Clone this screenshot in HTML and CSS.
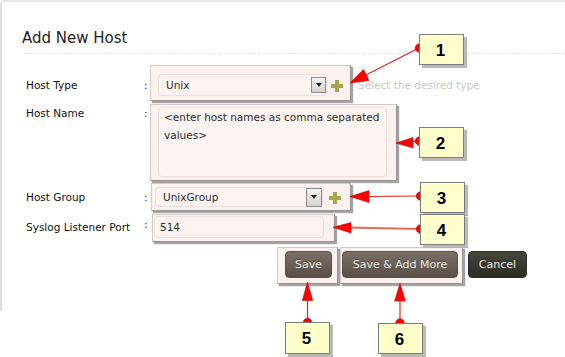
FILE: index.html
```html
<!DOCTYPE html>
<html>
<head>
<meta charset="utf-8">
<link rel="stylesheet" href="styles.css">
</head>
<body>
<div class="panel">
  <h1 class="title">Add New Host</h1>
  <div class="divider"></div>
  <div class="form">
    <div class="row row-type">
      <div class="label">Host Type</div>
      <div class="colon">:</div>
      <div class="hl hl-type">
        <div class="ctl">
          <div class="select sel-type"><span class="val">Unix</span><span class="drop"><span class="tri"></span></span></div>
          <svg class="plus" viewBox="0 0 12 12" width="12" height="12"><path d="M4 0h4v4h4v4h-4v4h-4v-4h-4v-4h4z" fill="#a6a64a"/></svg>
        </div>
      </div>
      <div class="hint">Select the desired type</div>
    </div>
    <div class="row row-name">
      <div class="label">Host Name</div>
      <div class="colon">:</div>
      <div class="hl hl-name">
        <div class="textarea">&lt;enter host names as comma separated values&gt;</div>
      </div>
    </div>
    <div class="row row-group">
      <div class="label">Host Group</div>
      <div class="colon">:</div>
      <div class="hl hl-group">
        <div class="ctl">
          <div class="select sel-group"><span class="val">UnixGroup</span><span class="drop drop-tall"><span class="tri"></span></span></div>
          <svg class="plus plus-group" viewBox="0 0 12 12" width="12" height="12"><path d="M4 0h4v4h4v4h-4v4h-4v-4h-4v-4h4z" fill="#a6a64a"/></svg>
        </div>
      </div>
    </div>
    <div class="row row-port">
      <div class="label">Syslog Listener Port</div>
      <div class="colon">:</div>
      <div class="hl hl-port">
        <div class="input">514</div>
      </div>
    </div>
    <div class="actions">
      <div class="hl hl-save"><div class="btn btn-save">Save</div></div>
      <div class="hl hl-more"><div class="btn btn-more">Save &amp; Add More</div></div>
      <div class="btn btn-cancel">Cancel</div>
    </div>
  </div>
</div>

<svg class="notes" width="565" height="357" viewBox="0 0 565 357">
  <defs>
    <filter id="sh" x="-20%" y="-20%" width="150%" height="150%">
      <feOffset dx="3" dy="3" in="SourceAlpha" result="o"/>
      <feColorMatrix in="o" type="matrix" values="0 0 0 0 0.45  0 0 0 0 0.45  0 0 0 0 0.45  0 0 0 0.9 0" result="c"/>
      <feMerge><feMergeNode in="c"/><feMergeNode in="SourceGraphic"/></feMerge>
    </filter>
  </defs>
  <!-- arrows -->
  <g stroke="#e0251a" stroke-width="1.2" fill="none">
    <line x1="419" y1="48" x2="364" y2="76"/>
    <line x1="419" y1="141" x2="410" y2="142"/>
    <line x1="420" y1="196" x2="366" y2="196.5"/>
    <line x1="420" y1="229" x2="348" y2="227.5" stroke="#e06a5a" stroke-width="1.8"/>
    <line x1="307.5" y1="322" x2="307.5" y2="298"/>
    <line x1="400" y1="323" x2="400" y2="299"/>
  </g>
  <g fill="#f00" stroke="#c00" stroke-width="0.6">
    <polygon points="350,83 369,80.5 363.5,69.5"/>
    <polygon points="396,143 413,137.5 413,148"/>
    <polygon points="350,196.5 369,190.5 369,202.5"/>
    <polygon points="333,227.3 351,222.5 351,233"/>
    <polygon points="307.5,282 302.3,300.5 312.7,300.5"/>
    <polygon points="400,283.5 394.6,301 405.4,301"/>
  </g>
  <g fill="#f00" stroke="#b00" stroke-width="0.6">
    <circle cx="419.5" cy="48" r="4.3"/>
    <circle cx="419.5" cy="141" r="4.3"/>
    <circle cx="420.5" cy="196" r="4.3"/>
    <circle cx="420.5" cy="229" r="4.3"/>
    <circle cx="307.5" cy="322.5" r="4.3"/>
    <circle cx="400" cy="323" r="4.3"/>
  </g>
  <g class="box" filter="url(#sh)">
    <rect x="419.5" y="34.5" width="44" height="30"/>
    <rect x="419.5" y="127.5" width="44" height="30"/>
    <rect x="420.5" y="182.5" width="44" height="30"/>
    <rect x="420.5" y="214.5" width="44" height="30"/>
    <rect x="285.5" y="322.5" width="44" height="31"/>
    <rect x="378.5" y="323.5" width="44" height="30"/>
  </g>
  <g class="num">
    <text x="440.5" y="55.5">1</text>
    <text x="440.5" y="148.5">2</text>
    <text x="441.5" y="203.5">3</text>
    <text x="441.5" y="235.5">4</text>
    <text x="306.5" y="344">5</text>
    <text x="399.5" y="344.5">6</text>
  </g>
</svg>
</body>
</html>
```

FILE: styles.css
```css
html, body {
  margin: 0;
  padding: 0;
  background: #ffffff;
}
body {
  position: relative;
  width: 565px;
  height: 357px;
  overflow: hidden;
  font-family: "DejaVu Sans", "Liberation Sans", sans-serif;
  font-size: 10.5px;
  color: #1a1a1a;
}
.panel {
  height: 309px;
  border-top: 2px solid #e6e6e6;
  border-left: 2px solid #dedede;
  border-top-left-radius: 5px;
  padding-left: 20px;
  box-sizing: content-box;
}
.title {
  margin: 27px 0 0 0;
  font-size: 15px;
  font-weight: normal;
  line-height: 18px;
  color: #1e1e1e;
}
.divider {
  margin: 6px 0 11px 2px;
  border-top: 1px dashed #e4e4e4;
}
.row {
  display: flex;
  align-items: flex-start;
  line-height: 14px;
}
.label {
  width: 122px;
  padding-left: 4px;
  box-sizing: border-box;
  color: #111;
  white-space: nowrap;
}
.colon {
  width: 6px;
  color: #333;
}
.row-type .label, .row-type .colon, .row-type .hint { margin-top: 13px; }
.row-name { margin-top: 3px; }
.row-name .label, .row-name .colon { margin-top: 2px; }
.row-group { margin-top: 2px; }
.row-group .label, .row-group .colon { margin-top: 7px; }
.row-port { margin-top: 3px; }
.row-port .label { margin-top: 6px; }
.row-port .colon { margin-top: 3px; }

.hl {
  box-sizing: border-box;
  background: #fbf2f0;
  border: 1px solid #d2caca;
  border-right-color: #9a9494;
  border-bottom-color: #9a9494;
  box-shadow: 2px 2px 1px rgba(90, 90, 90, 0.55);
}
.hl-type {
  width: 201px;
  height: 36px;
  padding: 8px 0 0 7px;
}
.hl-name {
  width: 247px;
  height: 77px;
  padding: 2px 9px 3px 7px;
}
.hl-group {
  margin-left: 1px;
  width: 200px;
  height: 28px;
  padding: 3px 0 0 3px;
}
.hl-port {
  margin-left: 2px;
  width: 183px;
  height: 28px;
  padding: 1px 0 0 1px;
}
.ctl {
  display: flex;
  align-items: center;
}
.select, .input, .textarea {
  box-sizing: border-box;
  background: #fdf4f2;
  border: 1px solid #ebdedc;
  border-radius: 4px;
  color: #2a2a2a;
}
.select {
  display: flex;
  align-items: center;
  justify-content: space-between;
  padding-left: 7px;
}
.sel-type { width: 169px; height: 22px; }
.sel-group { width: 168px; height: 20px; }
.drop {
  box-sizing: border-box;
  width: 15px;
  height: 16px;
  margin-right: 0;
  border: 1px solid #8c8c8c;
  background: linear-gradient(#f6f4f4, #d6d2d2);
  display: flex;
  align-items: center;
  justify-content: center;
}
.drop-tall { height: 19px; width: 16px; }
.tri {
  width: 0;
  height: 0;
  border-left: 3.5px solid transparent;
  border-right: 3.5px solid transparent;
  border-top: 4px solid #1e1e1e;
}
.plus {
  margin-left: 4px;
  margin-top: 2px;
  display: block;
}
.plus-group { margin-left: 6px; }
.hint {
  margin-left: 7px;
  color: #c9c9c9;
  white-space: nowrap;
}
.textarea {
  width: 229px;
  height: 70px;
  padding: 0 5px;
  line-height: 18px;
}
.input {
  width: 170px;
  height: 22px;
  padding-left: 5px;
  line-height: 20px;
}
.actions {
  display: flex;
  align-items: flex-start;
  margin-top: 5px;
  padding-left: 255px;
}
.hl-save {
  width: 61px;
  height: 37px;
  padding: 3px 0 0 7px;
}
.hl-more {
  margin-left: 2px;
  width: 123px;
  height: 37px;
  padding: 3px 0 0 1px;
}
.btn {
  box-sizing: border-box;
  height: 27px;
  border-radius: 4px;
  color: #f2eeea;
  font-size: 11px;
  line-height: 26px;
  text-align: center;
  text-shadow: 0 -1px 0 rgba(0, 0, 0, 0.35);
  background: linear-gradient(#7a7067, #5a5048);
  border: 1px solid #5b5149;
}
.btn-save { width: 47px; }
.btn-more { width: 116px; }
.btn-cancel {
  margin: 4px 0 0 5px;
  width: 59px;
  background: linear-gradient(#45463c, #2b2c24);
  border-color: #2e2f27;
}
.notes {
  position: absolute;
  left: 0;
  top: 0;
  pointer-events: none;
}
.box rect {
  fill: #ffffcc;
  stroke: #7d7d7d;
  stroke-width: 1;
}
.num text {
  font-family: "Liberation Sans", Arial, sans-serif;
  font-weight: bold;
  font-size: 17px;
  fill: #000;
  text-anchor: middle;
}
```
